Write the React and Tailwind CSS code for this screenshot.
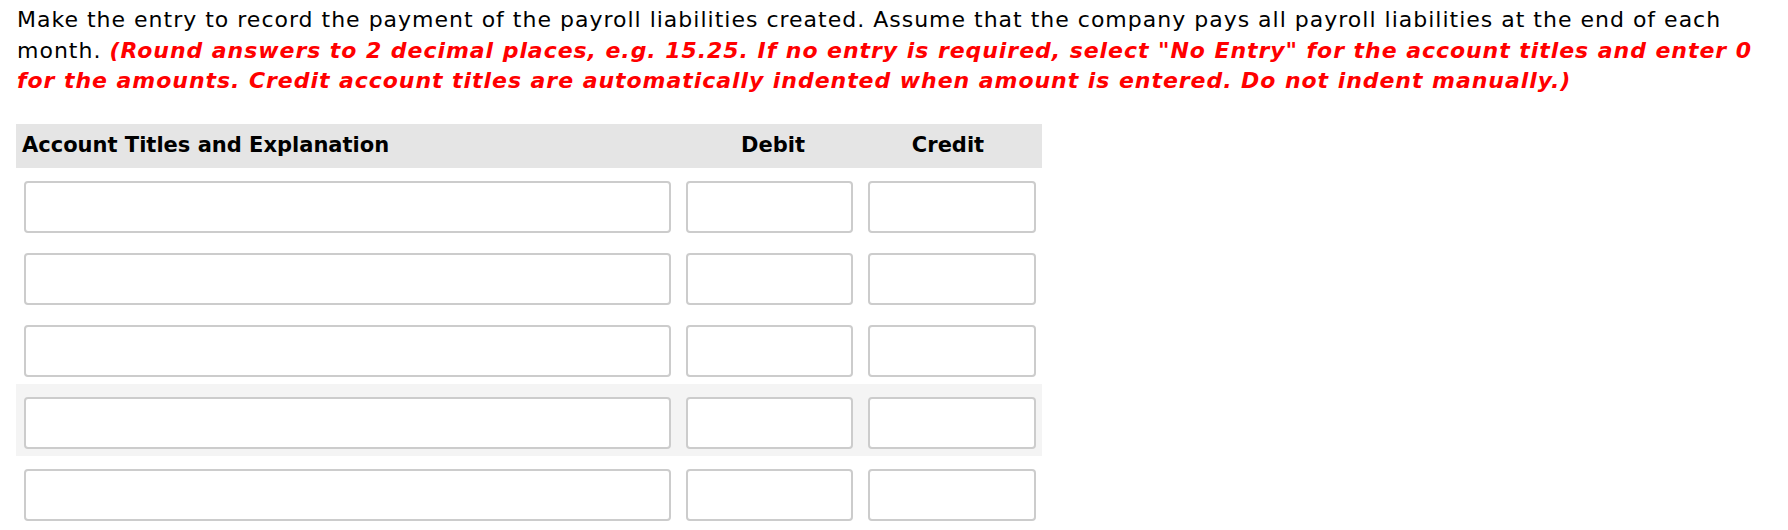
import React from "react";

const rows = [0, 1, 2, 3, 4];

function Field({ className }) {
  return (
    <input
      type="text"
      className={`h-[52px] rounded-[4px] border-2 border-[#cccccc] bg-white outline-none ${className}`}
    />
  );
}

export default function App() {
  return (
    <div
      className="w-[1788px] h-[530px] bg-white text-black overflow-hidden"
      style={{ fontFamily: '"DejaVu Sans", Verdana, sans-serif' }}
    >
      <p className="pl-[17px] pt-[5px] pr-[10px] text-[22px] leading-[30.5px] tracking-[1px] whitespace-nowrap">
        Make the entry to record the payment of the payroll liabilities created. Assume that the company pays all payroll liabilities at the end of each
        <br />
        month.{" "}
        <span className="font-bold italic text-[#ff0000] tracking-[0.95px]">
          (Round answers to 2 decimal places, e.g. 15.25. If no entry is required, select "No Entry" for the account titles and enter 0
          <br />
          for the amounts. Credit account titles are automatically indented when amount is entered. Do not indent manually.)
        </span>
      </p>

      <div className="mt-[27px] ml-[16px] w-[1026px]">
        <div className="flex h-[44px] items-center bg-[#e5e5e5] text-[21px] font-bold">
          <div className="w-[662px] pl-[6px]">Account Titles and Explanation</div>
          <div className="w-[182px] pl-[8px] text-center">Debit</div>
          <div className="w-[182px] pr-[6px] text-center">Credit</div>
        </div>
        {rows.map((r) => (
          <div
            key={r}
            className={`flex h-[72px] gap-[15px] pl-[8px] pr-[6px] pt-[13px] ${
              r === 3 ? "bg-[#f4f4f4]" : "bg-white"
            }`}
          >
            <Field className="w-[647px]" />
            <Field className="w-[167px]" />
            <Field className="w-[168px]" />
          </div>
        ))}
      </div>
    </div>
  );
}
